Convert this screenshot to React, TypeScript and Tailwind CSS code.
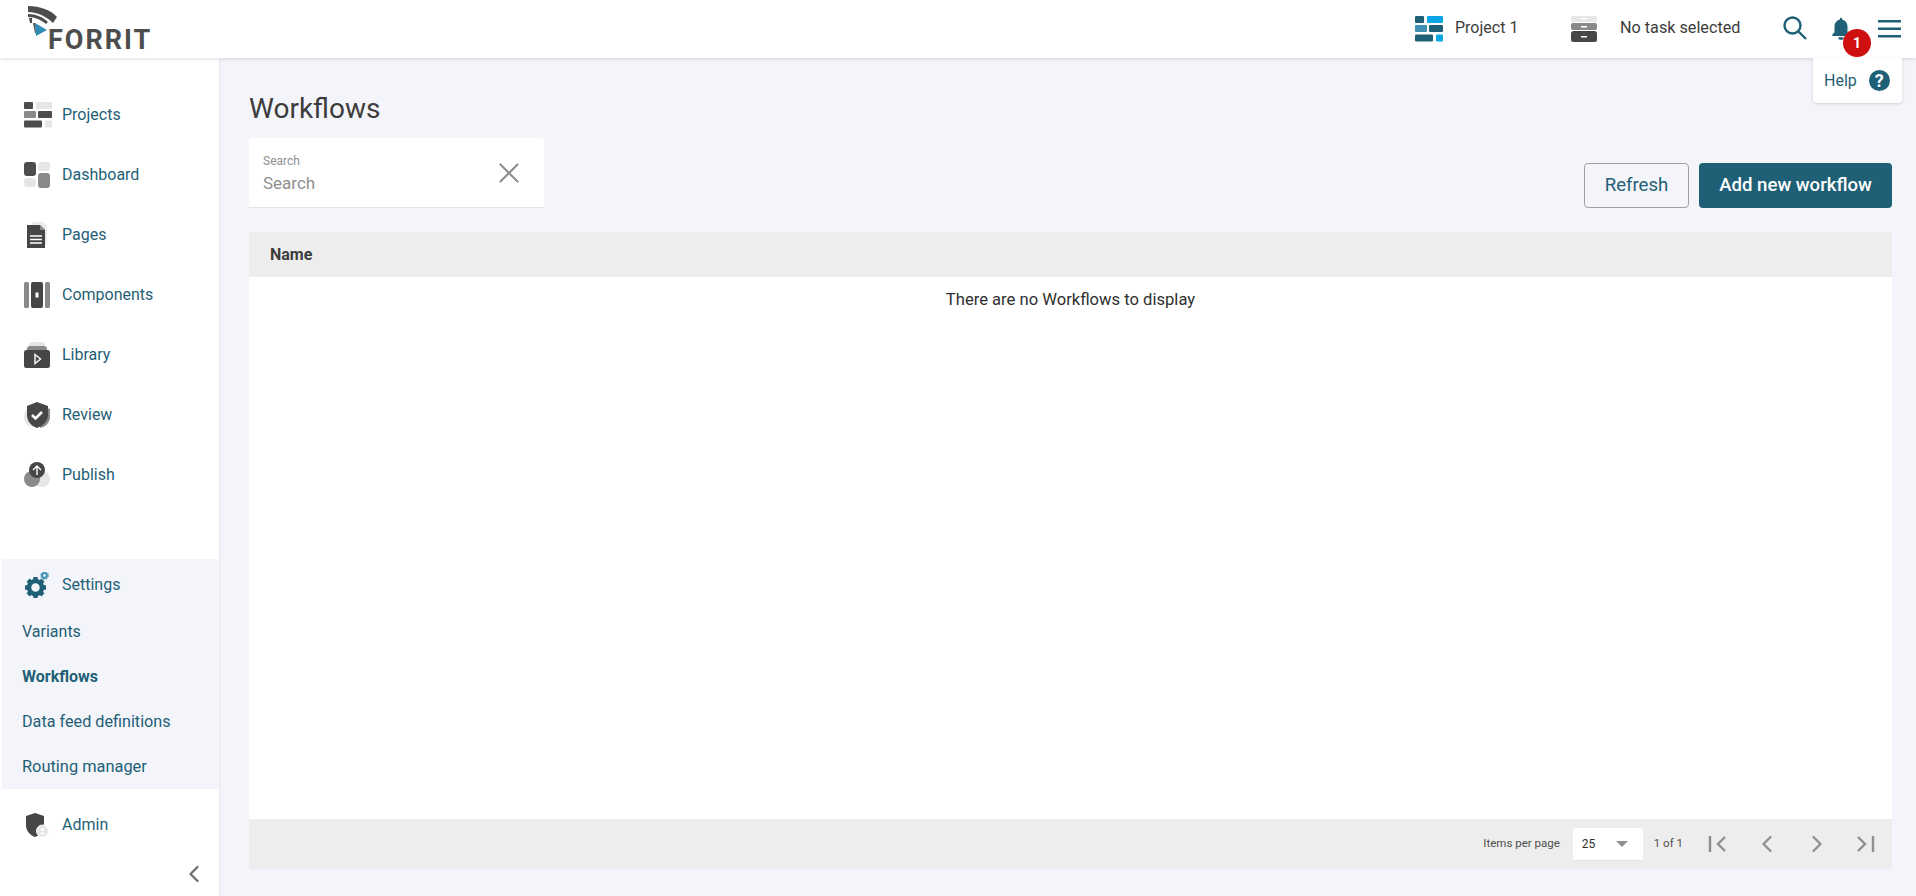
import { ChevronLeft, ChevronRight, X } from "lucide-react";
import { ReactNode } from "react";

const font = { fontFamily: '"Roboto", "Liberation Sans", sans-serif' };

function ProjectsIcon({ a = "#4d4d4d", b = "#e6e6e6", c = "#8a8a8a", d = "#e6e6e6" }) {
  return (
    <svg width="28" height="26" viewBox="0 0 28 26">
      <rect x="0" y="0" width="9" height="7" rx="1" fill={a} />
      <rect x="12" y="0" width="16" height="7" rx="1" fill={b} />
      <rect x="0" y="9" width="12" height="7" rx="1" fill={c} />
      <rect x="14" y="9" width="14" height="7" rx="1" fill={a} />
      <rect x="0" y="18.500" width="18" height="7" rx="1" fill={a} />
      <rect x="21" y="18.500" width="7" height="7" rx="1" fill={d} />
    </svg>
  );
}

function DashboardIcon() {
  return (
    <svg width="26" height="26" viewBox="0 0 26 26">
      <rect x="0" y="0" width="12" height="14" rx="3" fill="#4d4d4d" />
      <rect x="14" y="0" width="12" height="9" rx="3" fill="#e6e6e6" />
      <rect x="0" y="16" width="12" height="9" rx="3" fill="#e6e6e6" />
      <rect x="14" y="11" width="12" height="15" rx="3" fill="#8a8a8a" />
    </svg>
  );
}

function PagesIcon() {
  return (
    <svg width="26" height="26" viewBox="0 0 26 26">
      <path d="M8 0h11l4 4v19H8z" fill="#ececec" />
      <path d="M3 3h13l5 5v18H3z" fill="#464646" />
      <path d="M16 3l5 5h-5z" fill="#8a8a8a" />
      <path d="M6 14h12M6 17.500h12M6 21h12" stroke="#fff" strokeWidth="1.300" />
    </svg>
  );
}

function ComponentsIcon() {
  return (
    <svg width="26" height="26" viewBox="0 0 26 26">
      <rect x="0" y="0" width="5" height="26" rx="1.500" fill="#8a8a8a" />
      <rect x="7" y="0" width="12" height="26" rx="2" fill="#464646" />
      <rect x="21" y="0" width="5" height="26" rx="1.500" fill="#8a8a8a" />
      <rect x="11.500" y="10.500" width="3" height="5" fill="#fff" />
    </svg>
  );
}

function LibraryIcon() {
  return (
    <svg width="26" height="26" viewBox="0 0 26 26">
      <path d="M5 3a3 3 0 0 1 3-3h10a3 3 0 0 1 3 3v5H5z" fill="#e6e6e6" />
      <path d="M3 7a3 3 0 0 1 3-3h14a3 3 0 0 1 3 3v4H3z" fill="#8a8a8a" />
      <rect x="0" y="8" width="26" height="18" rx="2.500" fill="#464646" />
      <path d="M11 12.500l5.500 4.500-5.500 4.500z" fill="none" stroke="#fff" strokeWidth="1.400" />
    </svg>
  );
}

function ReviewIcon() {
  return (
    <svg width="26" height="26" viewBox="0 0 26 26">
      <ellipse cx="8" cy="15" rx="8" ry="10" fill="#e6e6e6" />
      <path d="M14 3l12 4v8c0 6-5 10-10 11z" fill="#8a8a8a" />
      <path d="M13 0l11 4v9c0 6-5 11-11 13C7 24 3 19 3 13V4z" fill="#464646" />
      <path d="M8 13l3.500 3.500L18 10" fill="none" stroke="#fff" strokeWidth="2.600" />
    </svg>
  );
}

function PublishIcon() {
  return (
    <svg width="26" height="26" viewBox="0 0 26 26">
      <circle cx="18" cy="17" r="8" fill="#e6e6e6" />
      <circle cx="8" cy="17" r="8" fill="#8a8a8a" />
      <circle cx="13" cy="8" r="8" fill="#464646" />
      <path d="M13 13V4M9 8l4-4 4 4" fill="none" stroke="#fff" strokeWidth="1.400" />
    </svg>
  );
}

function SettingsIcon() {
  const angles = [0, 45, 90, 135, 180, 225, 270, 315];
  return (
    <svg width="24" height="26" viewBox="0 0 24 26">
      <circle cx="10.500" cy="15.500" r="6.500" fill="none" stroke="#1f6076" strokeWidth="4.500" />
      {angles.map((a) => (
        <rect key={a} x="8.300" y="5" width="4.400" height="4" fill="#1f6076" transform={`rotate(${a} 10.500 15.500)`} />
      ))}
      <circle cx="19.500" cy="3.500" r="2.400" fill="none" stroke="#3a8fb0" strokeWidth="2" />
      <circle cx="19.500" cy="3.500" r="4" fill="none" stroke="#3a8fb0" strokeWidth="1" strokeDasharray="1.500 1.640" />
    </svg>
  );
}

function AdminIcon() {
  return (
    <svg width="24" height="26" viewBox="0 0 24 26">
      <path d="M10 1l9 3v9c0 6-4 10-9 12C5 23 1 19 1 13V4z" fill="#464646" />
      <circle cx="17.500" cy="19" r="6" fill="#e6e6e6" stroke="#fff" strokeWidth="1" />
      <circle cx="17.500" cy="17.500" r="1.600" fill="#fff" />
      <path d="M14.500 22c.5-2 5.500-2 6 0" fill="#fff" />
    </svg>
  );
}

function TaskIcon() {
  return (
    <svg width="26" height="26" viewBox="0 0 26 26">
      <rect x="0" y="0" width="26" height="6" rx="2" fill="#e6e6e6" />
      <rect x="10" y="2" width="6" height="1.500" fill="#fff" />
      <rect x="0" y="7" width="26" height="7" rx="2" fill="#8a8a8a" />
      <rect x="10" y="10" width="6" height="1.500" fill="#fff" />
      <rect x="0" y="15" width="26" height="11" rx="2.500" fill="#464646" />
      <rect x="10" y="20" width="6" height="1.500" fill="#fff" />
    </svg>
  );
}

function NavItem({ icon, label }: { icon: ReactNode; label: string }) {
  return (
    <div className="flex items-center h-[60px] pl-6 text-[16px] text-[#1f6076]">
      <div className="w-[38px] flex items-center shrink-0">{icon}</div>
      <span>{label}</span>
    </div>
  );
}

function Sidebar() {
  return (
    <aside className="w-[219px] shrink-0 bg-white flex flex-col shadow-[1px_0_2px_rgba(0,0,0,0.06)] pt-[27px]">
      <NavItem icon={<ProjectsIcon />} label="Projects" />
      <NavItem icon={<DashboardIcon />} label="Dashboard" />
      <NavItem icon={<PagesIcon />} label="Pages" />
      <NavItem icon={<ComponentsIcon />} label="Components" />
      <NavItem icon={<LibraryIcon />} label="Library" />
      <NavItem icon={<ReviewIcon />} label="Review" />
      <NavItem icon={<PublishIcon />} label="Publish" />

      <div className="mt-[54px] ml-0.5 bg-[#f4f5fb] h-[230px] flex flex-col text-[16px] text-[#1f6076]">
        <div className="flex items-center h-[50px] pt-[2px] pl-[23px]">
          <div className="w-[37px] flex items-center">
            <SettingsIcon />
          </div>
          <span>Settings</span>
        </div>
        <div className="flex items-center h-[45px] pl-5">Variants</div>
        <div className="flex items-center h-[45px] pl-5 font-bold">Workflows</div>
        <div className="flex items-center h-[45px] pl-5 pt-px text-[16.200px]">Data feed definitions</div>
        <div className="flex items-center h-[45px] pl-5 pt-px text-[16.400px]">Routing manager</div>
      </div>

      <div className="flex items-center h-[72px] pl-[25px] text-[16px] text-[#1f6076]">
        <div className="w-[37px] flex items-center">
          <AdminIcon />
        </div>
        <span>Admin</span>
      </div>
      <div className="flex justify-end pr-[11px] -mt-px">
        <ChevronLeft size={28} strokeWidth={2} className="text-[#6f6f6f]" />
      </div>
    </aside>
  );
}

function Header() {
  return (
    <header className="relative z-10 h-[58px] shrink-0 bg-white flex items-center shadow-[0_1px_4px_rgba(0,0,0,0.14)]">
      <div className="relative w-[219px] h-full">
        <svg width="34" height="34" viewBox="0 0 34 34" className="absolute left-[26px] top-1">
          <path d="M2 2C14 2 25 6 31 13L27 19C21 13 12 8 2 8z" fill="#4d4d4d" />
          <path d="M2 10C10 10 17 13 22 18L20 20C15 16 9 13 2 13z" fill="#4d4d4d" />
          <path d="M3 14h3v5H4z" fill="#4d4d4d" />
          <path d="M7 19h2l1 10H9z" fill="#4d4d4d" />
          <path d="M9 19L21 26L10 32z" fill="#2f8db5" />
        </svg>
        <span className="absolute left-[48px] top-[26px] text-[27px] leading-[29px] font-bold tracking-[2px] text-[#4d4d4d]">FORRIT</span>
      </div>
      <div className="ml-auto flex items-center h-full text-[16px] text-[#3c3c3c]">
        <ProjectsIcon a="#1f6076" b="#0aa5e4" c="#3f8fb3" d="#0aa5e4" />
        <span className="ml-3 w-[116px] pb-0.5">Project 1</span>
        <TaskIcon />
        <span className="ml-[23px] w-[163px] pb-0.5 text-[16.200px]">No task selected</span>
        <svg width="24" height="24" viewBox="0 0 24 24" fill="none" stroke="#1f6076" strokeWidth="2.400" className="-mt-[2px]">
          <circle cx="9.500" cy="9.500" r="8" />
          <path d="M15 15l8 8" />
        </svg>
        <div className="relative ml-[21px] mr-6">
          <svg width="26" height="26" viewBox="0 0 24 24" fill="#1f6076">
            <path d="M12 22a2.500 2.500 0 0 0 2.500-2.500h-5A2.500 2.500 0 0 0 12 22zm8-5l-2-2v-5c0-3.300-1.700-6-5-6.800V2.500a1 1 0 0 0-2 0v.7C7.700 4 6 6.700 6 10v5l-2 2v1.500h16z" />
          </svg>
          <div className="absolute left-[15px] top-[13px] w-7 h-7 rounded-full bg-[#cf1010] text-white text-[14px] font-bold flex items-center justify-center">1</div>
        </div>
        <svg width="23" height="18" viewBox="0 0 23 18" fill="#1f6076" className="mr-[15px]">
          <rect x="0" y="0" width="23" height="2.500" />
          <rect x="0" y="7.500" width="23" height="2.500" />
          <rect x="0" y="15" width="23" height="2.500" />
        </svg>
      </div>
      <div className="absolute right-[14px] top-[58px] w-[89px] h-[45px] bg-white rounded-b shadow-[0_1px_3px_rgba(0,0,0,0.15)] flex items-center pl-[11px] text-[16px] text-[#1f6076]">
        <span>Help</span>
        <div className="ml-3 w-[21px] h-[21px] rounded-full bg-[#1f6076] text-white text-[18px] font-bold flex items-center justify-center">?</div>
      </div>
    </header>
  );
}

function Workflows() {
  return (
    <main className="flex-1 min-w-0 flex flex-col pl-[30px] pr-6 pb-[27px]">
      <h1 className="mt-[31px] text-[28px] leading-[40px] text-[#3c3c3c]">Workflows</h1>
      <div className="mt-[9px] flex items-end justify-between">
        <div className="w-[295px] h-[70px] bg-white rounded-t border-b border-[#e3e3e3] flex items-center pl-[14px] pr-[18px]">
          <div className="flex-1 self-start pt-4">
            <div className="text-[12px] leading-[14px] text-[#8f8f8f]">Search</div>
            <div className="mt-[3px] text-[17px] leading-[24px] text-[#8f8f8f]">Search</div>
          </div>
          <X size={34} strokeWidth={1.500} className="text-[#8f8f8f]" />
        </div>
        <div className="flex gap-[10px]">
          <button className="w-[105px] h-[45px] rounded border border-[#a0a0a6] text-[18.600px] text-[#1f6076]">Refresh</button>
          <button className="w-[193px] h-[45px] rounded bg-[#1f6076] text-[18.600px] font-medium text-white">Add new workflow</button>
        </div>
      </div>
      <section className="mt-6 flex-1 flex flex-col min-h-0">
        <div className="h-[45px] bg-[#ededed] flex items-center pl-[21px] text-[16px] font-bold text-[#3c3c3c]">Name</div>
        <div className="flex-1 bg-white pt-[11px] text-center text-[16.600px] leading-[24px] text-[#2f2f2f]">There are no Workflows to display</div>
        <div className="h-[50px] bg-[#ededed] flex items-center justify-end text-[11.500px] text-[#4d4d4d]">
          <span>Items per page</span>
          <div className="ml-[13px] w-[70px] h-[33px] bg-white rounded-t border-b border-[#e3e3e3] flex items-center pl-[9px] text-[12px] text-[#2f2f2f]">
            <span className="w-[34px]">25</span>
            <div className="w-0 h-0 border-x-[6px] border-x-transparent border-t-[6px] border-t-[#8f8f8f]" />
          </div>
          <span className="ml-[11px]">1 of 1</span>
          <FirstPageIcon />
          <ChevronLeft size={28} strokeWidth={2} className="ml-[23px] text-[#8f8f8f]" />
          <ChevronRight size={28} strokeWidth={2} className="ml-[22px] text-[#8f8f8f]" />
          <LastPageIcon />
        </div>
      </section>
    </main>
  );
}

function FirstPageIcon() {
  return (
    <svg width="24" height="24" viewBox="0 0 24 24" fill="none" stroke="#8f8f8f" strokeWidth="2.400" className="ml-[23px]">
      <path d="M4 4v16M19 5l-7 7 7 7" />
    </svg>
  );
}

function LastPageIcon() {
  return (
    <svg width="24" height="24" viewBox="0 0 24 24" fill="none" stroke="#8f8f8f" strokeWidth="2.400" className="ml-[22px] mr-[15px]">
      <path d="M20 4v16M5 5l7 7-7 7" />
    </svg>
  );
}

export default function App() {
  return (
    <div style={font} className="w-full h-[896px] overflow-hidden flex flex-col bg-[#f4f5fb]">
      <Header />
      <div className="flex-1 flex min-h-0">
        <Sidebar />
        <Workflows />
      </div>
    </div>
  );
}
